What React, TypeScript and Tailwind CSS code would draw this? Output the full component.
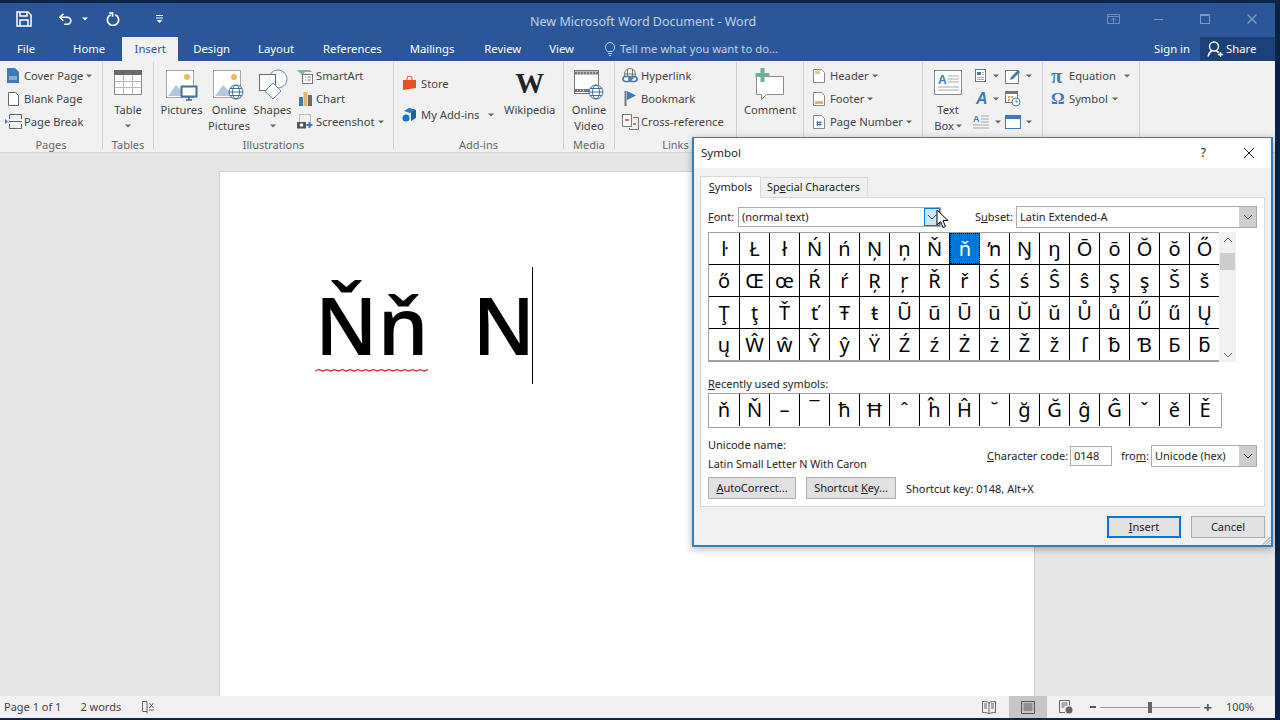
import type { ReactNode } from "react";

const rows = [
  "ŀŁłŃńŅņŇňŉŊŋŌōŎŏŐ",
  "őŒœŔŕŖŗŘřŚśŜŝŞşŠš",
  "ŢţŤťŦŧŨũŪūŬŭŮůŰűŲ",
  "ųŴŵŶŷŸŹźŻżŽžſƀƁƂƃ",
];
const recent = "ňŇ–¯ħĦˆĥĤ˘ğĞĝĜˇěĚ";

function Caret({ className = "" }: { className?: string }) {
  return (
    <svg width="6" height="4" viewBox="0 0 6 4" className={className}>
      <path d="M0 0.5h6L3 3.5z" fill="#666" />
    </svg>
  );
}

function Chevron({ color = "#444" }: { color?: string }) {
  return (
    <svg width="10" height="6" viewBox="0 0 10 6" fill="none">
      <path d="M1 1l4 4 4-4" stroke={color} strokeWidth="1" />
    </svg>
  );
}

function SmallRow({ icon, label, caret, gap }: { icon: ReactNode; label: string; caret?: boolean; gap?: string }) {
  return (
    <div className="flex h-[23px] items-center whitespace-nowrap">
      <span className="flex w-[18px] shrink-0 justify-center">{icon}</span>
      <span className="ml-[2px]">{label}</span>
      {caret && <Caret className={gap ?? "ml-[3px]"} />}
    </div>
  );
}

function Group({ width, label, children }: { width: string; label: string; children: ReactNode }) {
  return (
    <div className={`${width} flex h-[87px] shrink-0 flex-col border-r border-[#d0d0d0]`}>
      <div className="flex h-[75px] shrink-0 items-start">{children}</div>
      <div className="shrink-0 text-center text-[11px] leading-[16px] text-[#666]">{label}</div>
    </div>
  );
}

function BigLabel({ lines, caret }: { lines: string[]; caret?: boolean }) {
  return (
    <div className="mt-[1px] text-center leading-[16px]">
      {lines.map((l) => (
        <div key={l}>{l}</div>
      ))}
      {caret && (
        <div className="flex h-[16px] items-center justify-center">
          <Caret />
        </div>
      )}
    </div>
  );
}

function Mountain() {
  return (
    <>
      <rect x="0.5" y="0.5" width="27" height="27" fill="#fff" stroke="#a6a6a6" />
      <circle cx="21" cy="7" r="3" fill="#eab765" />
      <path d="M2 26l8-11 6 6 5-3 6 8z" fill="#b5c7de" />
    </>
  );
}

function Globe({ x, y, r }: { x: number; y: number; r: number }) {
  return (
    <g fill="#fff" stroke="#41719c" strokeWidth="1">
      <circle cx={x} cy={y} r={r} />
      <ellipse cx={x} cy={y} rx={r / 2} ry={r} fill="none" />
      <path d={`M${x - r} ${y}h${2 * r}M${x - r + 1} ${y - r / 2}h${2 * r - 2}M${x - r + 1} ${y + r / 2}h${2 * r - 2}`} />
    </g>
  );
}

function PagesGroup() {
  return (
    <Group width="w-[103px]" label="Pages">
      <div className="flex flex-col pl-[4px] pt-[2px]">
        <SmallRow
          caret
          label="Cover Page"
          icon={
            <svg width="12" height="15" viewBox="0 0 12 15">
              <path d="M0 0h8l4 4v11H0z" fill="#3d7ab8" />
              <path d="M2 9h8M2 11h8" stroke="#cfe0f0" strokeWidth="1" />
            </svg>
          }
        />
        <SmallRow
          label="Blank Page"
          icon={
            <svg width="11" height="14" viewBox="0 0 11 14" fill="#fff" stroke="#666">
              <path d="M.5.5h7l3 3v10H.5z" />
            </svg>
          }
        />
        <SmallRow
          label="Page Break"
          icon={
            <svg width="17" height="15" viewBox="0 0 17 15" fill="none">
              <path d="M4.500 5V.5h12V5M4.500 10v4.500h12V10M4 7.500h13" stroke="#666" />
              <path d="M0 5l3 2.500L0 10z" fill="#3d7ab8" />
            </svg>
          }
        />
      </div>
    </Group>
  );
}

function TablesGroup() {
  return (
    <Group width="w-[51px]" label="Tables">
      <div className="flex w-full flex-col items-center pt-[8px]">
        <svg width="28" height="25" viewBox="0 0 28 25">
          <rect x=".5" y=".5" width="27" height="24" fill="#fff" stroke="#8a8a8a" />
          <rect x="0" y="0" width="28" height="5" fill="#6a6a6a" />
          <path d="M9.500 5v19M18.500 5v19M1 11.500h26M1 17.500h26" stroke="#b5b5b5" />
        </svg>
        <div className="mt-[6px]">
          <BigLabel lines={["Table"]} caret />
        </div>
      </div>
    </Group>
  );
}

function IllustrationsGroup() {
  return (
    <Group width="w-[240px]" label="Illustrations">
      <div className="flex w-[55px] flex-col items-center pt-[8px]">
        <svg width="32" height="31" viewBox="0 0 32 31">
          <Mountain />
          <rect x="15.500" y="16.500" width="15" height="10" fill="#fff" stroke="#41719c" strokeWidth="2" />
          <path d="M20 30h6M23 27v3" stroke="#41719c" strokeWidth="1.500" />
        </svg>
        <BigLabel lines={["Pictures"]} />
      </div>
      <div className="flex w-[40px] flex-col items-center pt-[8px]">
        <svg width="32" height="31" viewBox="0 0 32 31">
          <Mountain />
          <Globe x={23} y={22} r={7} />
        </svg>
        <BigLabel lines={["Online", "Pictures"]} />
      </div>
      <div className="ml-[5px] flex w-[37px] flex-col items-center pt-[7px]">
        <svg width="30" height="32" viewBox="0 0 30 32" fill="#fff" stroke="#6f8fb0">
          <circle cx="20" cy="10" r="9" stroke="#5d8ab5" />
          <rect x="1.500" y="5.500" width="16" height="16" stroke="#6a6a6a" fill="#ffffffcc" />
          <path d="M15 14l8 8-8 8-8-8z" stroke="#5d8ab5" />
        </svg>
        <BigLabel lines={["Shapes"]} caret />
      </div>
      <div className="ml-[5px] flex flex-col pt-[2px]">
        <SmallRow
          label="SmartArt"
          icon={
            <svg width="16" height="16" viewBox="0 0 16 16">
              <path d="M0 2h13l2 2H8L5 7z" fill="#7fb29a" />
              <rect x="5.500" y="6.500" width="10" height="9" fill="#fff" stroke="#777" />
              <path d="M8 9h1M8 12h1M10.500 9h3M10.500 12h3" stroke="#777" />
            </svg>
          }
        />
        <SmallRow
          label="Chart"
          icon={
            <svg width="15" height="15" viewBox="0 0 15 15">
              <rect x="1" y="6" width="4" height="9" fill="#3d7ab8" />
              <rect x="5.500" y="1" width="4" height="14" fill="#e2b76a" />
              <rect x="10" y="4" width="4" height="11" fill="#6a6a6a" />
            </svg>
          }
        />
        <SmallRow
          caret
          label="Screenshot"
          icon={
            <svg width="16" height="15" viewBox="0 0 16 15">
              <rect x="2.500" y=".5" width="11" height="10" fill="none" stroke="#888" strokeDasharray="1 1" />
              <rect x="0" y="8" width="9" height="6.500" fill="#555" />
              <circle cx="4.500" cy="11" r="1.800" fill="#fff" />
              <path d="M12.500 8v6M9.500 11h6" stroke="#3d7ab8" strokeWidth="2" />
            </svg>
          }
        />
      </div>
    </Group>
  );
}

function AddinsGroup() {
  return (
    <Group width="w-[170px]" label="Add-ins">
      <div className="flex w-[110px] flex-col pl-[8px]">
        <div className="flex h-[23px] translate-y-[10px] items-center">
          <svg width="15" height="15" viewBox="0 0 15 15">
            <path d="M5 4V2.500A2 2 0 0 1 10 2.500V4" fill="none" stroke="#e0481f" />
            <path d="M1 4h13v8L1 14z" fill="#e8501f" />
          </svg>
          <span className="ml-[4px]">Store</span>
        </div>
        <div className="mt-[8px] flex h-[23px] translate-y-[10px] items-center whitespace-nowrap">
          <svg width="15" height="15" viewBox="0 0 15 15">
            <path d="M7 1l7 2v8l-5 3V5z" fill="#1e5f9e" />
            <path d="M7 1L2 4l6 2 6-3z" fill="#2c7bc4" />
            <circle cx="4" cy="11" r="3.500" fill="#0f78d4" />
          </svg>
          <span className="ml-[4px]">My Add-ins</span>
          <Caret className="ml-[9px]" />
        </div>
      </div>
      <div className="flex flex-col items-center">
        <div className="h-[34px] pt-[1px] font-['Liberation_Serif',serif] text-[29px] leading-[40px] font-bold text-[#222]">W</div>
        <div className="mt-[6px]">Wikipedia</div>
      </div>
    </Group>
  );
}

function MediaGroup() {
  return (
    <Group width="w-[51px]" label="Media">
      <div className="flex w-full flex-col items-center pt-[8px]">
        <svg width="30" height="31" viewBox="0 0 30 31">
          <rect x=".5" y=".5" width="24" height="23" fill="#fff" stroke="#777" />
          <path d="M1 1.500h24v3H1zM1 19h24v3H1z" fill="#777" />
          <path d="M3 3h1M6 3h1M9 3h1M12 3h1M15 3h1M18 3h1M21 3h1M3 20.500h1M6 20.500h1M9 20.500h1" stroke="#fff" />
          <Globe x={22} y={22} r={7} />
        </svg>
        <BigLabel lines={["Online", "Video"]} />
      </div>
    </Group>
  );
}

function LinksGroup() {
  return (
    <Group width="w-[122px]" label="Links">
      <div className="flex flex-col pl-[6px] pt-[2px]">
        <SmallRow
          label="Hyperlink"
          icon={
            <svg width="17" height="16" viewBox="0 0 17 16" fill="none">
              <circle cx="8" cy="6" r="5.500" stroke="#777" />
              <path d="M5.500 1v10M10.500 1v10M2.500 6h11" stroke="#777" />
              <rect x="1" y="8.500" width="8" height="5" rx="2.500" fill="#fff" stroke="#3d7ab8" strokeWidth="1.600" />
              <rect x="7" y="8.500" width="8" height="5" rx="2.500" stroke="#3d7ab8" strokeWidth="1.600" />
            </svg>
          }
        />
        <SmallRow
          label="Bookmark"
          icon={
            <svg width="13" height="15" viewBox="0 0 13 15">
              <path d="M1.500 0v15" stroke="#777" strokeWidth="2" />
              <path d="M3 0l9 4.500L3 9z" fill="#3d7ab8" />
            </svg>
          }
        />
        <SmallRow
          label="Cross-reference"
          icon={
            <svg width="17" height="16" viewBox="0 0 17 16" fill="none">
              <path d="M.5.5h9v12h-9z" stroke="#777" fill="#fff" />
              <path d="M11 3.500h5.500v12h-9V14" stroke="#777" />
              <path d="M3 6h4" stroke="#d24726" strokeWidth="1.500" />
              <path d="M11 10h3" stroke="#d24726" strokeWidth="1.500" />
            </svg>
          }
        />
      </div>
    </Group>
  );
}

function CommentGroup() {
  return (
    <Group width="w-[67px]" label="">
      <div className="flex w-full flex-col items-center pt-[6px]">
        <svg width="32" height="34" viewBox="0 0 32 34" fill="none">
          <path d="M2.500 8.500h27v18h-17l-5 5v-5h-5z" fill="#fff" stroke="#8a8a8a" />
          <path d="M8.500 0v14M1.500 7h14" stroke="#70ad9a" strokeWidth="4" />
        </svg>
        <div>Comment</div>
      </div>
    </Group>
  );
}

function HeaderGroup() {
  const page = (extra: ReactNode) => (
    <svg width="12" height="14" viewBox="0 0 12 14" fill="#fff" stroke="#888">
      <path d="M.5.500h8l3 3v10H.5z" />
      {extra}
    </svg>
  );
  return (
    <Group width="w-[119px]" label="">
      <div className="flex flex-col pl-[6px] pt-[2px]">
        <SmallRow caret label="Header" icon={page(<rect x="2" y="2" width="5" height="3" fill="#e2c68e" stroke="none" />)} />
        <SmallRow caret label="Footer" icon={page(<rect x="2" y="9" width="8" height="3" fill="#d9b577" stroke="none" />)} />
        <SmallRow
          caret
          label="Page Number"
          icon={page(
            <path d="M4.500 6v5M7 6v5M3.500 7.500h5M3.500 9.500h5" stroke="#3d6fa5" fill="none" />,
          )}
        />
      </div>
    </Group>
  );
}

function TextGroup() {
  return (
    <Group width="w-[120px]" label="">
      <div className="flex w-[50px] flex-col items-center pt-[8px]">
        <svg width="29" height="26" viewBox="0 0 29 26">
          <rect x=".5" y=".5" width="27" height="24" fill="#fff" stroke="#888" />
          <text x="4" y="14" fontSize="12" fontWeight="700" fill="#3d7ab8" fontFamily="Liberation Sans">A</text>
          <path d="M14 6h11M14 9h11M14 12h11M4 17h21M4 20h21" stroke="#aaa" />
        </svg>
        <div className="mt-[6px] text-center leading-[16px]">
          <div>Text</div>
          <div className="flex items-center">
            Box
            <Caret className="ml-[2px]" />
          </div>
        </div>
      </div>
      <div className="ml-[2px] flex flex-col pt-[2px]">
        <div className="flex h-[23px] items-center gap-[6px]">
          <svg width="12" height="14" viewBox="0 0 12 14">
            <rect x=".5" y=".5" width="10" height="12" fill="#fff" stroke="#777" />
            <rect x="2" y="3" width="4" height="3" fill="#3d7ab8" />
            <path d="M2 8.500h7M2 10.500h7M7 3.500h2M7 5.500h2" stroke="#aaa" />
          </svg>
          <Caret />
        </div>
        <div className="flex h-[23px] items-center gap-[6px] pl-[1px]">
          <span className="w-[11px] font-['Liberation_Sans',sans-serif] text-[16px] leading-none font-bold text-[#3d7ab8] italic">A</span>
          <Caret />
        </div>
        <div className="flex h-[23px] items-center gap-[6px]">
          <svg width="16" height="16" viewBox="0 0 16 16" className="-ml-[2px]">
            <text x="0" y="8" fontSize="9" fontWeight="700" fill="#3d7ab8" fontFamily="Liberation Sans">A</text>
            <path d="M8 2h8M8 5h8M8 8h8M0 11h16M0 14h16" stroke="#aaa" />
          </svg>
          <Caret />
        </div>
      </div>
      <div className="ml-[4px] flex flex-col pt-[2px]">
        <div className="flex h-[23px] items-center gap-[5px]">
          <svg width="16" height="16" viewBox="0 0 16 16" fill="none">
            <path d="M.5 2.500h13v13H.5z" fill="#fff" stroke="#777" />
            <path d="M5 12l1-3 7-7 2 2-7 7z" fill="#3d7ab8" />
          </svg>
          <Caret />
        </div>
        <div className="flex h-[23px] items-center">
          <svg width="16" height="16" viewBox="0 0 16 16">
            <rect x=".5" y=".5" width="12" height="11" fill="#fff" stroke="#777" />
            <rect x="0" y="0" width="13" height="3" fill="#777" />
            <path d="M3 5h2v2H3zM6 5h2v2H6zM3 8h2v2H3z" fill="#e2a650" />
            <circle cx="11" cy="11" r="4" fill="#fff" stroke="#3d7ab8" />
            <path d="M11 9v2h2" stroke="#3d7ab8" fill="none" />
          </svg>
        </div>
        <div className="flex h-[23px] items-center gap-[5px]">
          <svg width="16" height="14" viewBox="0 0 16 14">
            <rect x=".5" y=".5" width="15" height="13" fill="#fff" stroke="#3d7ab8" />
            <rect x="0" y="0" width="16" height="4" fill="#3d7ab8" />
          </svg>
          <Caret />
        </div>
      </div>
    </Group>
  );
}

function SymbolsGroup() {
  return (
    <Group width="w-[97px]" label="">
      <div className="flex flex-col pl-[8px] pt-[2px]">
        <div className="flex h-[23px] items-center whitespace-nowrap">
          <span className="w-[14px] font-['Liberation_Serif',serif] text-[20px] leading-none font-bold text-[#3d7ab8]">π</span>
          <span className="ml-[4px]">Equation</span>
          <Caret className="ml-[8px]" />
        </div>
        <div className="flex h-[23px] items-center whitespace-nowrap">
          <span className="w-[14px] font-['Liberation_Serif',serif] text-[17px] leading-none font-bold text-[#3d7ab8]">Ω</span>
          <span className="ml-[4px]">Symbol</span>
          <Caret className="ml-[4px]" />
        </div>
      </div>
    </Group>
  );
}

function TitleBar() {
  return (
    <div className="flex h-[34px] items-center bg-[#2b579a] text-[12.500px] text-[#c3d0e4]">
      <div className="mb-[2px] flex w-[190px] items-center">
        <svg width="16" height="16" viewBox="0 0 16 16" fill="none" className="ml-[16px]">
          <path d="M1 1h11l3 3v11H1z" stroke="#fff" strokeWidth="1.500" />
          <path d="M4 1v4h7V1M4 15v-6h8v6" stroke="#fff" strokeWidth="1.500" />
        </svg>
        <svg width="14" height="14" viewBox="0 0 16 14" fill="none" className="ml-[27px]">
          <path d="M1 5h8.500a4 4 0 0 1 0 8H6M5 1L1 5l4 4" stroke="#fff" strokeWidth="1.800" />
        </svg>
        <Caret className="ml-[9px] [&_path]:fill-white" />
        <svg width="14" height="14" viewBox="0 0 15 15" fill="none" className="ml-[18px]">
          <path d="M10 3a6 6 0 1 1-5 0" stroke="#fff" strokeWidth="1.800" />
          <path d="M3.500 1H7v4" stroke="#fff" strokeWidth="1.800" />
        </svg>
        <svg width="7" height="8" viewBox="0 0 7 8" className="ml-[36px]">
          <path d="M0 .5h7M0 3h7" stroke="#fff" />
          <path d="M.5 5h6L3.500 8z" fill="#fff" />
        </svg>
      </div>
      <div className="ml-[340px] mt-[4px] whitespace-nowrap">New Microsoft Word Document - Word</div>
      <div className="mb-[2px] ml-auto flex items-center">
        <svg width="13" height="10" viewBox="0 0 13 10" fill="none" className="mr-[34px]">
          <path d="M.5.500h12v9H.5zM1 2.500h11" stroke="#6d8dbd" />
          <path d="M4 6.500l2.500-2.500L9 6.500M6.500 4v5" stroke="#6d8dbd" />
        </svg>
        <div className="mr-[37px] h-[1px] w-[9px] bg-[#7b98c4]" />
        <div className="mr-[37px] h-[10px] w-[10px] border border-t-2 border-[#7b98c4]" />
        <svg width="10" height="10" viewBox="0 0 10 10" className="mr-[18px]">
          <path d="M.5.500l9 9M9.500.500l-9 9" stroke="#7b98c4" strokeWidth="1.500" />
        </svg>
      </div>
    </div>
  );
}

function TabBar() {
  const tabs: [string, string][] = [
    ["Home", "ml-[38px]"],
    ["Insert", "ml-[17px]"],
    ["Design", "ml-[15px]"],
    ["Layout", "ml-[28px]"],
    ["References", "ml-[29px]"],
    ["Mailings", "ml-[28px]"],
    ["Review", "ml-[30px]"],
    ["View", "ml-[28px]"],
  ];
  return (
    <div className="flex h-[24px] items-stretch bg-[#2b579a] text-[11.300px] text-white">
      <div className="ml-[17px] flex items-center">File</div>
      {tabs.map(([name, ml]) =>
        name === "Insert" ? (
          <div key={name} className={`${ml} flex w-[56px] items-center justify-center bg-[#f1f1f1] text-[#2b579a]`}>
            {name}
          </div>
        ) : (
          <div key={name} className={`${ml} flex items-center`}>
            {name}
          </div>
        ),
      )}
      <div className="ml-[31px] flex items-center text-[#c3d0e4]">
        <svg width="10" height="14" viewBox="0 0 10 14" fill="none" className="mr-[5px]">
          <path d="M2.500 9.500C1 8 .5 7 .5 5a4.500 4.500 0 0 1 9 0c0 2-.5 3-2 4.500zM3 11.500h4M4 13.500h2" stroke="#c3d0e4" />
        </svg>
        Tell me what you want to do...
      </div>
      <div className="ml-auto flex items-center">Sign in</div>
      <div className="ml-[10px] flex w-[75px] items-center bg-[#1e4078]">
        <svg width="17" height="17" viewBox="0 0 17 17" fill="none" className="ml-[7px]">
          <circle cx="7" cy="5.500" r="4.500" stroke="#fff" strokeWidth="1.400" />
          <path d="M1 15.500c1-4 3-5.500 4-6M9 9.500c1 .5 2 1 2.500 2.500M13.500 11v5M11 13.500h5" stroke="#fff" strokeWidth="1.400" />
        </svg>
        <span className="ml-[2px]">Share</span>
      </div>
    </div>
  );
}

function Ribbon() {
  return (
    <div className="flex h-[92px] border-b border-[#d4d4d4] bg-[#f1f1f1] pt-[1px] text-[11.200px] leading-[16px] text-[#444]">
      <PagesGroup />
      <TablesGroup />
      <IllustrationsGroup />
      <AddinsGroup />
      <MediaGroup />
      <LinksGroup />
      <CommentGroup />
      <HeaderGroup />
      <TextGroup />
      <SymbolsGroup />
    </div>
  );
}

function Squiggle() {
  return (
    <svg width="113" height="3" viewBox="0 0 113 3" className="block">
      <path
        d={"M0 2" + Array.from({ length: 29 }, (_, i) => (i % 2 ? "l2 1.500" : "l2-1.500")).join("")}
        transform="scale(1.950 1)"
        fill="none"
        stroke="#cc3333"
        strokeWidth="1"
      />
    </svg>
  );
}

function Document() {
  return (
    <div className="flex h-[543px] overflow-hidden bg-[#e6e6e6] pl-[219px] pt-[18px]">
      <div className="h-[600px] w-[816px] border border-[#d0d0d0] bg-white pl-[95px] pt-[95px]">
        <div className="flex h-[117px] items-center font-['Open_Sans',sans-serif] text-[80px] leading-none font-semibold text-black">
          <span className="pb-[4px]">Ňň</span>
          <span className="ml-[44px] pb-[4px]">N</span>
          <span className="-ml-[3px] h-[117px] w-[1px] bg-black" />
        </div>
        <div className="-mt-[15px]">
          <Squiggle />
        </div>
      </div>
    </div>
  );
}

function StatusBar() {
  return (
    <div className="flex h-[22px] items-center bg-[#f1f1f1] text-[11px] text-[#444]">
      <span className="ml-[4px]">Page 1 of 1</span>
      <span className="ml-[19px]">2 words</span>
      <svg width="15" height="14" viewBox="0 0 15 14" fill="none" className="ml-[20px]">
        <path d="M6 1.500H1.500v10H6M6 1.500l0 12" stroke="#666" />
        <path d="M8.500 3l4 5M12.500 3l-4 5M8 10h5" stroke="#666" />
      </svg>
      <div className="ml-auto flex h-full items-center">
        <svg width="14" height="13" viewBox="0 0 14 13" fill="none">
          <path d="M7 2C5 .5 3 .5.500.5v11c2.500 0 4.500 0 6.500 1.500 2-1.500 4-1.500 6.500-1.500V.5C11 .5 9 .5 7 2zM7 2v11M2 3h3M2 5h3M2 7h3M9 3h3M9 5h3M9 7h3" stroke="#666" />
        </svg>
        <div className="ml-[13px] flex h-full w-[38px] items-center justify-center bg-[#c6c6c6]">
          <svg width="14" height="13" viewBox="0 0 14 13" fill="none">
            <path d="M.5.500h13v12H.5zM2.500 3h9M2.500 5h9M2.500 7h9M2.500 9h9" stroke="#555" />
          </svg>
        </div>
        <svg width="14" height="14" viewBox="0 0 14 14" fill="none" className="ml-[12px]">
          <path d="M6 12.500H.5V.5h10v5M2.500 3h6M2.500 5h6M2.500 7h3" stroke="#666" />
          <circle cx="10" cy="10" r="3.500" fill="#666" />
        </svg>
        <div className="ml-[17px] h-[2px] w-[6px] bg-[#555]" />
        <div className="relative ml-[4px] h-[1px] w-[100px] bg-[#999]">
          <div className="absolute left-[48px] top-[-5px] h-[11px] w-[4px] bg-[#666]" />
        </div>
        <span className="ml-[3px] text-[15px] leading-none font-bold text-[#555]">+</span>
        <span className="ml-[14px] mr-[21px]">100%</span>
      </div>
    </div>
  );
}

function Combo({ width, height, text, active }: { width: string; height: string; text: string; active?: boolean }) {
  return (
    <div className={`${width} ${height} flex items-stretch border border-[#aaa] bg-white`}>
      <span className="flex flex-1 items-center pl-[3px]">{text}</span>
      {active ? (
        <span className="flex w-[16px] items-center justify-center border border-[#0078d7] bg-[#cce4f7]">
          <Chevron />
        </span>
      ) : (
        <span className="flex w-[17px] items-center justify-center bg-[#cdcdcd]">
          <Chevron />
        </span>
      )}
    </div>
  );
}

function CharGrid() {
  return (
    <div className="flex">
      <div className="w-[511px] border border-r-0 border-b-2 border-[#a0a0a0]">
        {rows.map((row, r) => (
          <div key={r} className="grid grid-cols-[31px_repeat(15,30px)_29px] border-b border-black last:border-b-0">
            {Array.from(row).map((c, i) => {
              const sel = r === 0 && i === 8;
              return (
                <div
                  key={i}
                  className={`flex h-[31px] items-center justify-center overflow-hidden text-[20px] leading-none ${
                    i < 16 ? "border-r border-black" : ""
                  } ${sel ? "border border-dotted bg-[#0078d7] text-white" : "text-black"}`}
                >
                  {c}
                </div>
              );
            })}
          </div>
        ))}
      </div>
      <div className="flex h-[130px] w-[17px] flex-col items-center bg-[#f0f0f0] pb-[4px] pt-[5px]">
        <div className="rotate-180">
          <Chevron color="#666" />
        </div>
        <div className="mt-[10px] h-[17px] w-[15px] bg-[#cdcdcd]" />
        <div className="mt-auto">
          <Chevron color="#666" />
        </div>
      </div>
    </div>
  );
}

function SymbolDialog() {
  return (
    <div className="absolute left-[692px] top-[137px] flex h-[410px] w-[581px] flex-col border-[2px] border-t-[1px] border-[#2f7fc0] bg-[#f0f0f0] text-[11px] leading-[16px] text-[#222] shadow-[0_2px_8px_rgba(0,0,0,0.3)]">
      <div className="flex h-[30px] shrink-0 items-center bg-white pl-[7px] text-[11.500px]">
        Symbol
        <span className="ml-auto mr-[37px] text-[12px]">?</span>
        <svg width="12" height="12" viewBox="0 0 12 12" className="mr-[16px]">
          <path d="M1 1l10 10M11 1L1 11" stroke="#222" />
        </svg>
      </div>
      <div className="flex h-[29px] shrink-0 items-end pl-[6px]">
        <div className="z-10 -mb-px h-[22px] w-[61px] border border-b-0 border-[#d9d9d9] bg-white pt-[2px] text-center">
          <u>S</u>ymbols
        </div>
        <div className="h-[20px] w-[107px] border border-b-0 border-l-0 border-[#d9d9d9] bg-[#f0f0f0] pl-[6px] pt-[1px] text-[10.800px]">
          Sp<u>e</u>cial Characters
        </div>
      </div>
      <div className="ml-[6px] h-[310px] w-[565px] border border-[#d9d9d9] bg-white pl-[7px] pt-[8px]">
        <div className="flex h-[22px] items-center">
          <span className="w-[30px]">
            <u>F</u>ont:
          </span>
          <Combo width="w-[203px]" height="h-[20px]" text="(normal text)" active />
          <span className="ml-[34px] w-[41px]">
            S<u>u</u>bset:
          </span>
          <Combo width="w-[241px]" height="h-[22px]" text="Latin Extended-A" />
        </div>
        <div className="mt-[4px]">
          <CharGrid />
        </div>
        <div className="mt-[14px] h-[16px]">
          <u>R</u>ecently used symbols:
        </div>
        <div className="mt-[1px] flex h-[35px] w-[514px] border border-[#a0a0a0]">
          {Array.from(recent).map((c, i) => (
            <div
              key={i}
              className={`flex h-[32px] items-center justify-center text-[20px] leading-none text-black ${
                i === 0 ? "w-[31px]" : "w-[30px]"
              } ${i < 16 ? "border-r border-black" : ""}`}
            >
              {c}
            </div>
          ))}
        </div>
        <div className="mt-[8px] flex">
          <div className="w-[279px]">
            <div className="h-[19px] leading-[18px]">Unicode name:</div>
            <div className="h-[19px] text-[10.800px] leading-[18px] whitespace-nowrap">Latin Small Letter N With Caron</div>
          </div>
          <div className="mt-[9px] flex h-[22px] items-center whitespace-nowrap">
            <span className="w-[83px]">
              <u>C</u>haracter code:
            </span>
            <div className="h-[20px] w-[42px] border border-[#aaa] pl-[3px] leading-[18px]">0148</div>
            <span className="ml-[9px] w-[30px]">
              fro<u>m</u>:
            </span>
            <Combo width="w-[106px]" height="h-[22px]" text="Unicode (hex)" />
          </div>
        </div>
        <div className="mt-[3px] flex items-center">
          <div className="h-[22px] w-[88px] border border-[#adadad] bg-[#e1e1e1] text-center leading-[20px]">
            <u>A</u>utoCorrect...
          </div>
          <div className="ml-[10px] h-[22px] w-[90px] border border-[#adadad] bg-[#e1e1e1] text-center leading-[20px]">
            Shortcut <u>K</u>ey...
          </div>
          <span className="ml-[10px] pt-[1px]">Shortcut key: 0148, Alt+X</span>
        </div>
      </div>
      <div className="mt-[9px] flex justify-end gap-[10px] pr-[6px]">
        <div className="h-[22px] w-[74px] border-2 border-[#0078d7] bg-[#e1e1e1] text-center leading-[18px]">
          <u>I</u>nsert
        </div>
        <div className="h-[22px] w-[74px] border border-[#adadad] bg-[#e1e1e1] text-center leading-[20px]">Cancel</div>
      </div>
      <svg width="9" height="9" viewBox="0 0 9 9" className="absolute bottom-0 right-0">
        <path d="M8.500 1L1 8.500M8.500 4L4 8.500M8.500 7L7 8.500" stroke="#9a9a9a" />
      </svg>
    </div>
  );
}

function MouseCursor() {
  return (
    <svg width="13" height="20" viewBox="0 0 13 20" className="absolute left-[936px] top-[209px]">
      <path d="M1 1v15l3.500-3.500L7 18.500l2.500-1L7 11.500h5z" fill="#fff" stroke="#000" strokeWidth="1" />
    </svg>
  );
}

export default function App() {
  return (
    <div className="relative h-[720px] w-[1280px] overflow-hidden bg-[#0b2344] pr-[5px] pt-[3px] font-['Noto_Sans',sans-serif]">
      <TitleBar />
      <TabBar />
      <Ribbon />
      <Document />
      <StatusBar />
      <SymbolDialog />
      <MouseCursor />
    </div>
  );
}
